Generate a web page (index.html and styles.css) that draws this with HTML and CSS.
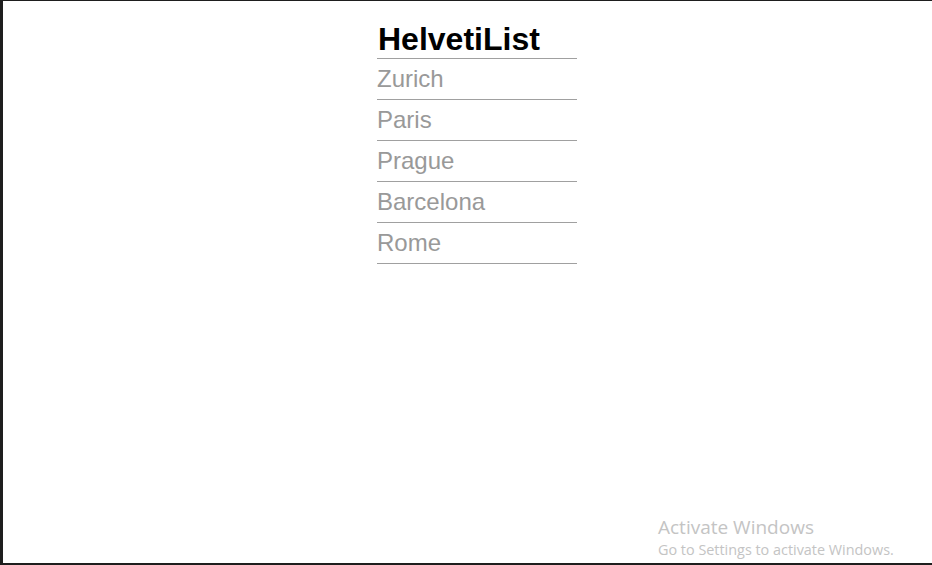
FILE: index.html
```html
<!DOCTYPE html>
<html lang="en">
<head>
<meta charset="utf-8">
<title>HelvetiList</title>
<link rel="stylesheet" href="styles.css">
</head>
<body>
<div class="frame">
  <main class="list-wrap">
    <h1 class="title">HelvetiList</h1>
    <ul class="cities">
      <li class="city">Zurich</li>
      <li class="city">Paris</li>
      <li class="city">Prague</li>
      <li class="city">Barcelona</li>
      <li class="city">Rome</li>
    </ul>
  </main>
  <div class="activate">
    <div class="activate-title">Activate Windows</div>
    <div class="activate-sub">Go to Settings to activate Windows.</div>
  </div>
</div>
</body>
</html>
```

FILE: styles.css
```css
html, body {
  margin: 0;
  padding: 0;
  background: #ffffff;
}

.frame {
  position: relative;
  box-sizing: border-box;
  width: 932px;
  height: 565px;
  border-top: 1px solid #1e1e1e;
  border-left: 3px solid #1e1e1e;
  border-bottom: 2px solid #1e1e1e;
  padding-top: 20px;
  padding-left: 374px;
  font-family: "Liberation Sans", Arial, sans-serif;
}

.list-wrap {
  width: 200px;
}

.title {
  margin: 0;
  font-size: 32px;
  font-weight: bold;
  line-height: 37px;
  color: #000000;
  padding-left: 1px;
  border-bottom: 1px solid #a0a0a0;
}

.cities {
  list-style: none;
  margin: 0;
  padding: 0;
}

.city {
  font-size: 24px;
  line-height: 40px;
  color: #999999;
  border-bottom: 1px solid #a0a0a0;
}

.activate {
  position: absolute;
  left: 655px;
  top: 513px;
  font-family: "Open Sans", "Noto Sans", sans-serif;
  color: #c4c4c4;
}

.activate-title {
  font-size: 19px;
  line-height: 26px;
}

.activate-sub {
  font-size: 14.4px;
  line-height: 20px;
}
```
